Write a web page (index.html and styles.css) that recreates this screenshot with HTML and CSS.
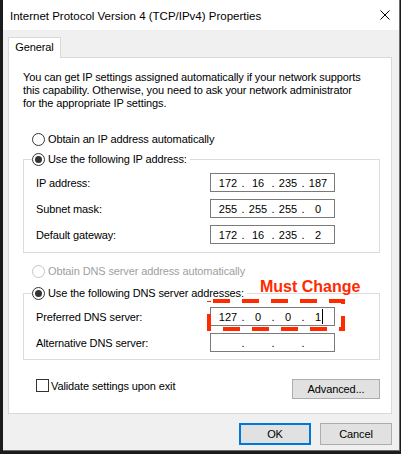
FILE: index.html
```html
<!DOCTYPE html>
<html>
<head>
<meta charset="utf-8">
<link rel="stylesheet" href="styles.css">
</head>
<body>
<div class="window">
  <div class="titlebar">
    <span class="title">Internet Protocol Version 4 (TCP/IPv4) Properties</span>
    <svg class="close" width="10" height="10" viewBox="0 0 10 10"><path d="M0.5 0.5 L9.5 9.5 M9.5 0.5 L0.5 9.5" stroke="#000" stroke-width="1" fill="none"/></svg>
  </div>
  <div class="content">
    <div class="tabs"><div class="tab">General</div></div>
    <div class="panel">
      <p class="desc">You can get IP settings assigned automatically if your network supports<br>this capability. Otherwise, you need to ask your network administrator<br>for the appropriate IP settings.</p>

      <div class="radio-row first"><span class="radio"></span>Obtain an IP address automatically</div>

      <fieldset class="group">
        <legend class="radio-row"><span class="radio checked"></span>Use the following IP address:</legend>
        <div class="rows">
          <span class="label">IP address:</span>
          <div class="ipbox"><span class="seg">172</span><span class="dot">.</span><span class="seg">16</span><span class="dot">.</span><span class="seg">235</span><span class="dot">.</span><span class="seg">187</span></div>
          <span class="label">Subnet mask:</span>
          <div class="ipbox"><span class="seg">255</span><span class="dot">.</span><span class="seg">255</span><span class="dot">.</span><span class="seg">255</span><span class="dot">.</span><span class="seg">0</span></div>
          <span class="label">Default gateway:</span>
          <div class="ipbox"><span class="seg">172</span><span class="dot">.</span><span class="seg">16</span><span class="dot">.</span><span class="seg">235</span><span class="dot">.</span><span class="seg">2</span></div>
        </div>
      </fieldset>

      <div class="radio-row disabled dns-auto"><span class="radio"></span>Obtain DNS server address automatically</div>

      <fieldset class="group dns">
        <legend class="radio-row"><span class="radio checked"></span>Use the following DNS server addresses:</legend>
        <div class="rows">
          <span class="label">Preferred DNS server:</span>
          <div class="ipbox"><span class="seg">127</span><span class="dot">.</span><span class="seg">0</span><span class="dot">.</span><span class="seg">0</span><span class="dot">.</span><span class="seg">1<i class="caret"></i></span></div>
          <span class="label">Alternative DNS server:</span>
          <div class="ipbox"><span class="seg"></span><span class="dot">.</span><span class="seg"></span><span class="dot">.</span><span class="seg"></span><span class="dot">.</span><span class="seg"></span></div>
        </div>
      </fieldset>

      <div class="options">
        <label class="check"><span class="checkbox"></span>Validate settings upon exit</label>
        <button class="btn adv">Advanced...</button>
      </div>

      <span class="must">Must Change</span>
      <svg class="dashbox" width="142" height="36" viewBox="0 0 142 36"><rect x="4" y="4" width="134" height="28" fill="none" stroke="#ff2a00" stroke-width="4" stroke-dasharray="17 12" stroke-dashoffset="25"/></svg>
    </div>
    <div class="actions">
      <button class="btn ok">OK</button>
      <button class="btn">Cancel</button>
    </div>
  </div>
</div>
</body>
</html>
```
FILE: styles.css
```css
html, body {
  margin: 0;
  padding: 0;
}
body {
  width: 401px;
  height: 454px;
  background: #1c1c1c;
  font-family: "Liberation Sans", Arial, sans-serif;
  font-size: 11px;
  color: #000;
  overflow: hidden;
}
.window {
  margin-left: 3px;
  width: 397px;
  height: 451px;
  box-sizing: border-box;
  background: #f0f0f0;
  border-right: 1px solid #6b6b6b;
  border-bottom: 1px solid #6b6b6b;
}
.titlebar {
  height: 30px;
  background: #fff;
  display: flex;
  align-items: center;
  justify-content: space-between;
  padding: 0 9px 0 7px;
}
.title {
  font-size: 11.5px;
  line-height: 16px;
  margin-top: 1px;
}
.close {
  display: block;
}
.content {
  padding: 7px 0 0 5px;
}
.tabs {
  display: flex;
}
.tab {
  position: relative;
  z-index: 1;
  width: 53px;
  height: 21px;
  box-sizing: border-box;
  border: 1px solid #d9d9d9;
  border-bottom: none;
  background: #fff;
  margin-bottom: -1px;
  text-align: center;
  line-height: 19px;
  letter-spacing: -0.1px;
}
.panel {
  position: relative;
  width: 384px;
  height: 357px;
  box-sizing: border-box;
  border: 1px solid #d9d9d9;
  background: #fff;
  padding: 0 0 0 14px;
  letter-spacing: -0.12px;
}
.desc {
  margin: 13px 0 0 0;
  line-height: 13px;
}
.radio-row {
  display: flex;
  align-items: center;
  gap: 3px;
  height: 16px;
  line-height: 16px;
}
.radio-row.first {
  margin: 21px 0 0 9px;
}
.radio {
  width: 13px;
  height: 13px;
  box-sizing: border-box;
  border: 1px solid #333;
  border-radius: 50%;
  background: #fff;
  display: flex;
  align-items: center;
  justify-content: center;
  flex: none;
}
.radio.checked::after {
  content: "";
  width: 7px;
  height: 7px;
  border-radius: 50%;
  background: #333;
}
.disabled {
  color: #a0a0a0;
}
.disabled .radio {
  border-color: #c4c4c4;
}
.dns-auto {
  margin: 10px 0 0 9px;
}
.group {
  width: 357px;
  box-sizing: border-box;
  margin: 4px 0 0 0;
  padding: 6px 0 8px 12px;
  border: 1px solid #dcdcdc;
  min-width: 0;
}
.group.dns {
  margin-top: 6px;
  padding-bottom: 7px;
}
.group legend {
  margin-left: -4px;
  padding: 0 3px 0 0;
}
.rows {
  display: grid;
  grid-template-columns: 174px 125px;
  grid-auto-rows: 19px;
  row-gap: 7px;
  align-items: center;
}
.label {
  line-height: 16px;
}
.ipbox {
  height: 19px;
  box-sizing: border-box;
  border: 1px solid #7a7a7a;
  background: #fff;
  display: flex;
  align-items: center;
  padding-left: 5px;
  letter-spacing: 0;
  line-height: 16px;
}
.seg {
  width: 24px;
  text-align: center;
}
.dot {
  width: 6px;
  text-align: center;
}
.caret {
  display: inline-block;
  width: 1px;
  height: 15px;
  background: #000;
  vertical-align: middle;
  margin: -2px -2px 0 1px;
}
.options {
  width: 357px;
  margin-top: 19px;
  display: flex;
  justify-content: space-between;
  align-items: flex-start;
}
.check {
  display: flex;
  align-items: center;
  gap: 2px;
  margin-left: 13px;
  height: 13px;
  line-height: 16px;
}
.checkbox {
  width: 13px;
  height: 13px;
  box-sizing: border-box;
  border: 1px solid #333;
  background: #fff;
  flex: none;
}
.btn {
  font-family: "Liberation Sans", Arial, sans-serif;
  font-size: 11px;
  letter-spacing: -0.1px;
  color: #000;
  background: #e1e1e1;
  border: 1px solid #adadad;
  box-sizing: border-box;
  padding: 0;
  margin: 0;
  line-height: 16px;
}
.adv {
  width: 88px;
  height: 20px;
}
.actions {
  width: 384px;
  margin-top: 9px;
  display: flex;
  justify-content: flex-end;
  gap: 9px;
}
.actions .btn {
  width: 72px;
  height: 22px;
}
.actions .ok {
  border: 2px solid #0078d7;
}
.must {
  position: absolute;
  left: 251px;
  top: 221px;
  font-size: 16px;
  line-height: 16px;
  font-weight: bold;
  color: #ff2a00;
  letter-spacing: 0;
  white-space: nowrap;
}
.dashbox {
  position: absolute;
  left: 196px;
  top: 239px;
}
```
